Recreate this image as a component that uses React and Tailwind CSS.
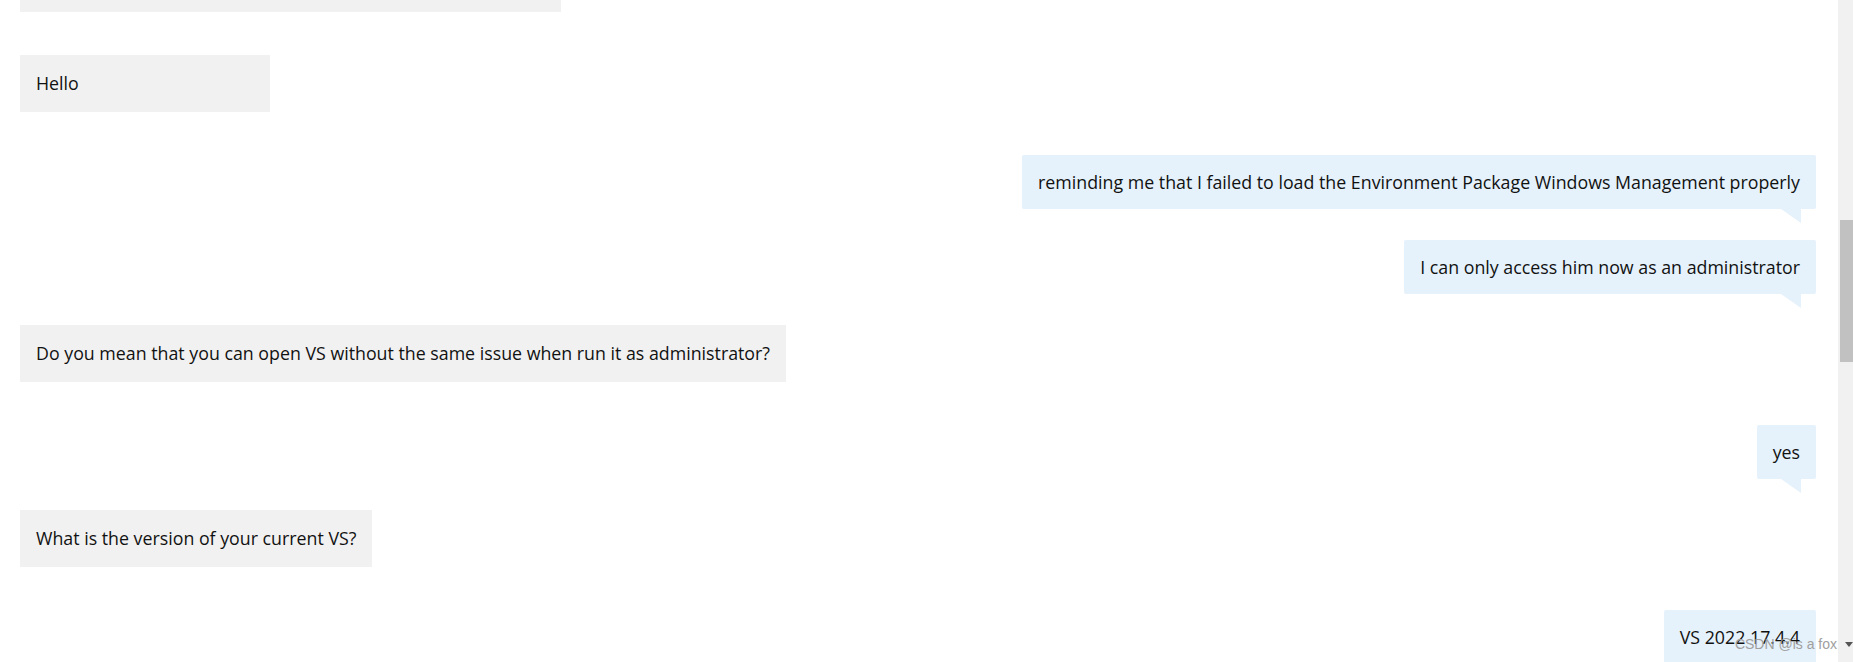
import React from "react";

const messages = [
  { side: "left", text: "", width: "w-[541px]" },
  { side: "left", text: "Hello" },
  { side: "right", text: "reminding me that I failed to load the Environment Package Windows Management properly" },
  { side: "right", text: "I can only access him now as an administrator" },
  { side: "left", text: "Do you mean that you can open VS without the same issue when run it as administrator?" },
  { side: "right", text: "yes" },
  { side: "left", text: "What is the version of your current VS?" },
  { side: "right", text: "VS 2022 17.4.4" },
];

const LeftBubble = ({ text, width }) => (
  <div className="flex justify-start mb-[43px]">
    <div className={`bg-[#f1f1f1] min-w-[250px] h-[57px] px-4 flex items-center whitespace-nowrap ${width || ""}`}>
      {text}
    </div>
  </div>
);

const RightBubble = ({ text }) => (
  <div className="flex flex-col items-end mb-[17px]">
    <div className="bg-[#e5f1fb] rounded-[2px] h-[54px] px-4 flex items-center whitespace-nowrap">
      {text}
    </div>
    <div className="pr-[15px]">
      <svg width="20" height="14" viewBox="0 0 20 14" className="block">
        <polygon points="0,0 20,0 20,14" fill="#e5f1fb" />
      </svg>
    </div>
  </div>
);

export default function App() {
  return (
    <div
      className="relative flex h-[662px] w-full overflow-hidden bg-white text-[17.8px] text-[#111]"
      style={{ fontFamily: '"Open Sans", "Noto Sans", sans-serif' }}
    >
      <div className="flex-1 pl-5 pr-[22px]">
        <div className="-mt-[45px]">
          {messages.map((m, i) =>
            m.side === "left" ? (
              <LeftBubble key={i} text={m.text} width={m.width} />
            ) : (
              <RightBubble key={i} text={m.text} />
            )
          )}
        </div>
      </div>

      <div className="w-[15px] bg-[#f1f1f1] pt-[220px] pl-[2px]">
        <div className="h-[142px] bg-[#c1c1c1]" />
      </div>

      <div
        className="absolute right-0 bottom-[7px] flex items-center gap-[8px] text-[14px] text-[#a0a0a0]"
        style={{ fontFamily: '"Liberation Sans", Arial, sans-serif' }}
      >
        <span>CSDN @is a fox</span>
        <svg width="8" height="5" viewBox="0 0 8 5" className="block">
          <polygon points="0,0 8,0 4,5" fill="#555" />
        </svg>
      </div>
    </div>
  );
}
